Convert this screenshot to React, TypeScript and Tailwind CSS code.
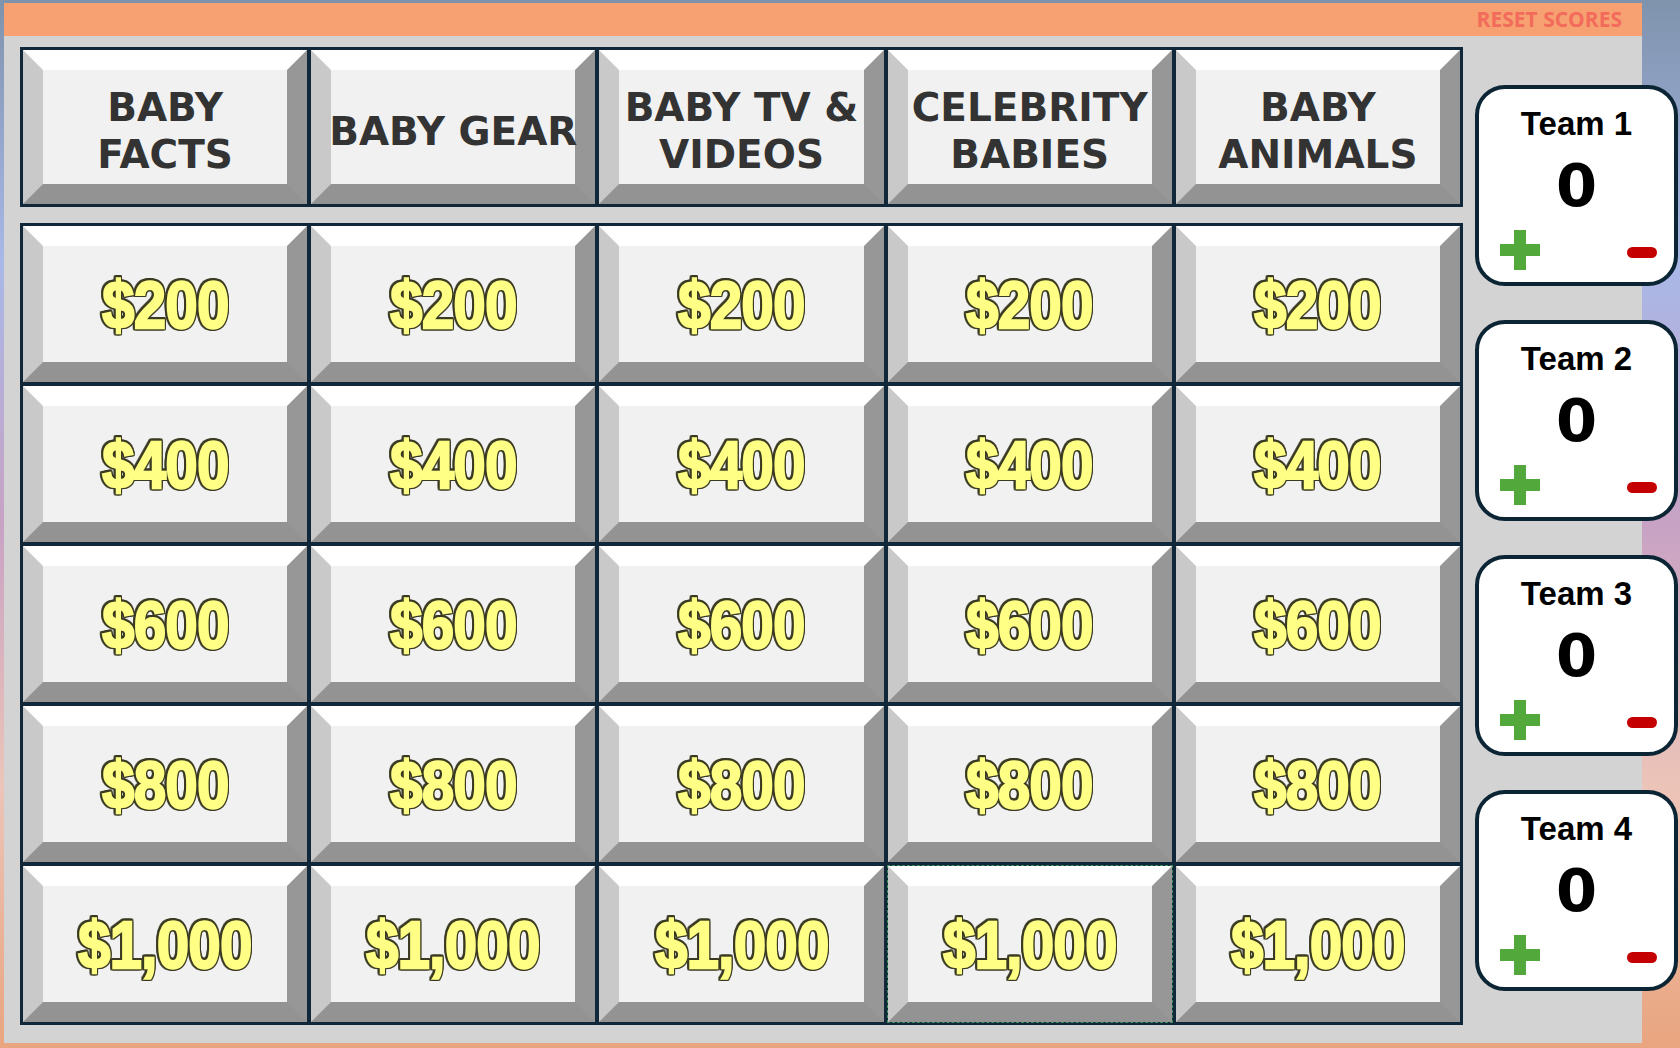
import React from "react";

const cats: string[][] = [
  ["BABY", "FACTS"],
  ["BABY GEAR"],
  ["BABY TV &", "VIDEOS"],
  ["CELEBRITY", "BABIES"],
  ["BABY", "ANIMALS"],
];
const vals = ["$200", "$400", "$600", "$800", "$1,000"];

function Bevel({ children, h, extra }: { children: React.ReactNode; h: string; extra?: string }) {
  return (
    <div className={`border-2 border-[#10283a] ${h} ${extra ?? ""}`}>
      <div className="h-full border-[20px] border-t-white border-l-[#c9c9c9] border-r-[#979797] border-b-[#939393] bg-[#f1f1f1] flex items-center justify-center">
        {children}
      </div>
    </div>
  );
}

function TeamCard({ n }: { n: number }) {
  return (
    <div className="w-[203px] h-[201px] border-4 border-[#0c2535] rounded-[30px] bg-white flex flex-col items-center pt-[17px]">
      <div className="font-['Liberation_Sans',Arial,sans-serif] font-bold text-[33px] leading-[36px] text-black">
        Team {n}
      </div>
      <div className="mt-[14px] font-['DejaVu_Sans',sans-serif] font-bold text-[59px] leading-[59px] text-black">
        0
      </div>
      <div className="mt-[15px] w-full flex items-center justify-between pl-[21px] pr-[17px]">
        <svg width="40" height="40" viewBox="0 0 40 40">
          <rect x="0" y="14" width="40" height="12" fill="#52a83b" />
          <rect x="14" y="0" width="12" height="40" fill="#52a83b" />
        </svg>
        <div className="w-[30px] h-[11px] rounded-full bg-[#c40000] mt-[4px]" />
      </div>
    </div>
  );
}

export default function App() {
  return (
    <div className="w-[1680px] h-[1048px] overflow-hidden pt-[3px] pl-[4px] bg-[linear-gradient(180deg,#7f93ad_0%,#a8b8e8_25%,#c8a2c4_50%,#ecc4b8_75%,#e9a57f_100%)]">
      <div className="w-[1638px] h-[1040px] bg-[#d3d3d3] flex flex-col">
        <div className="h-[33px] shrink-0 bg-[#f7a072] flex items-center justify-end pr-[20px]">
          <span className="font-['Open_Sans',sans-serif] font-bold text-[21px] leading-none text-[#f26b5b]">
            RESET SCORES
          </span>
        </div>
        <div className="flex pl-[16px]">
          <div className="w-[1443px] shrink-0 flex flex-col pt-[11px] gap-[16px]">
            <div className="grid grid-cols-5 border border-[#10283a]">
              {cats.map((c, i) => (
                <Bevel key={i} h="h-[158px]">
                  <div className="pt-[8px] font-['DejaVu_Sans',sans-serif] font-bold text-[39px] leading-[47px] text-[#333333] text-center whitespace-nowrap">
                    {c.map((l, j) => (
                      <div key={j}>{l}</div>
                    ))}
                  </div>
                </Bevel>
              ))}
            </div>
            <div className="grid grid-cols-5 border border-[#10283a]">
              {vals.map((v, r) =>
                cats.map((_, c) => (
                  <Bevel
                    key={`${r}-${c}`}
                    h="h-[160px]"
                    extra={r === 4 && c === 3 ? "outline-1 outline-dashed outline-[#3c8c5c] -outline-offset-2" : ""}
                  >
                    <span className="inline-block scale-x-[0.86] font-['Liberation_Sans',sans-serif] font-bold text-[67px] leading-none tracking-[-0.5px] text-[#ffff85] [-webkit-text-stroke:2.5px_#ffff85] [filter:drop-shadow(1.2px_0_0_#3a3a22)_drop-shadow(-1.2px_0_0_#3a3a22)_drop-shadow(0_1.2px_0_#3a3a22)_drop-shadow(0_-1.2px_0_#3a3a22)]">
                      {v}
                    </span>
                  </Bevel>
                ))
              )}
            </div>
          </div>
          <div className="ml-[12px] w-[203px] shrink-0 pt-[49px] flex flex-col gap-[34px]">
            {[1, 2, 3, 4].map((n) => (
              <TeamCard key={n} n={n} />
            ))}
          </div>
        </div>
      </div>
    </div>
  );
}
